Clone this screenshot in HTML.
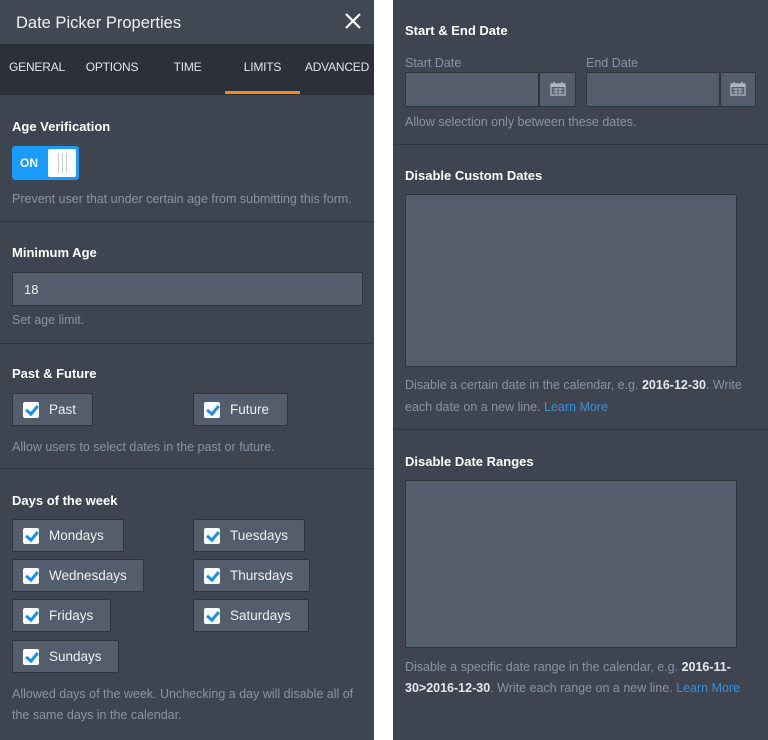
<!DOCTYPE html>
<html><head><meta charset="utf-8"><style>
*{margin:0;padding:0;box-sizing:border-box}
body{width:768px;height:740px;background:#fff;position:relative;overflow:hidden;font-family:"Liberation Sans",sans-serif;font-size:13px}
.p{position:absolute;top:0;height:740px;background:#3f4550}
.a{position:absolute;white-space:nowrap}
.h{font-weight:bold;color:#fff;font-size:13px;line-height:16px}
.d{color:#8893a3;font-size:12.5px;line-height:16px}
.hr{position:absolute;height:1px;background:#2f343c}
.cb{position:absolute;height:33px;background:#535d6c;border:1px solid #2f343c;border-radius:2px;color:#eef0f3;font-size:13.5px;line-height:31px;padding-left:36px}
.cb:before{content:"";position:absolute;left:10px;top:8px;width:16px;height:16px;background:#fff;border-radius:2px}
.cb:after{content:"";position:absolute;left:15px;top:9px;width:5px;height:9px;border:solid #1a8ff0;border-width:0 3px 3px 0;transform:rotate(40deg)}
.in{position:absolute;background:#535d6c;border:1px solid #2f343c;border-radius:2px}
.tab{position:absolute;top:44px;height:51px;line-height:46px;color:#e2e5ea;font-size:12px;text-align:center;letter-spacing:-0.2px}
.b{color:#e6e8ec;font-weight:bold}
.lm{color:#3b8fd6}
</style></head><body>
<div class="p" style="left:0;width:374px">
 <div class="a" style="left:0;top:0;width:374px;height:44px;background:#414753"></div>
 <div class="a" style="left:16px;top:13px;color:#eef0f3;font-size:16.5px;line-height:20px">Date Picker Properties</div>
 <svg class="a" style="left:345px;top:13px" width="16" height="16"><path d="M1 1L15 15M15 1L1 15" stroke="#fff" stroke-width="2.2"/></svg>
 <div class="a" style="left:0;top:44px;width:374px;height:51px;background:#2c3038"></div>
 <div class="tab" style="left:0;width:74px">GENERAL</div>
 <div class="tab" style="left:74px;width:76px">OPTIONS</div>
 <div class="tab" style="left:150px;width:75px">TIME</div>
 <div class="tab" style="left:225px;width:75px">LIMITS</div>
 <div class="tab" style="left:300px;width:74px">ADVANCED</div>
 <div class="a" style="left:225px;top:91px;width:75px;height:3px;background:#f5872b"></div>

 <div class="a h" style="left:12px;top:119px">Age Verification</div>
 <div class="a" style="left:12px;top:146px;width:67px;height:34px;background:#1a9cff;border-radius:3px"></div>
 <div class="a" style="left:20px;top:155px;color:#fff;font-weight:bold;font-size:12px;line-height:16px">ON</div>
 <div class="a" style="left:48px;top:149px;width:28px;height:28px;background:#fff;border-radius:2px"></div>
 <div class="a" style="left:58px;top:153px;width:9px;height:20px;border-left:1px solid #ccc;border-right:1px solid #ccc"></div>
 <div class="a" style="left:62px;top:153px;width:1px;height:20px;background:#ccc"></div>
 <div class="a d" style="left:12px;top:191px">Prevent user that under certain age from submitting this form.</div>
 <div class="hr" style="left:0;top:221px;width:374px"></div>

 <div class="a h" style="left:12px;top:245px">Minimum Age</div>
 <div class="in" style="left:12px;top:272px;width:351px;height:34px"></div>
 <div class="a" style="left:24px;top:282px;color:#eef0f3;font-size:13px;line-height:16px">18</div>
 <div class="a d" style="left:12px;top:312px">Set age limit.</div>
 <div class="hr" style="left:0;top:343px;width:374px"></div>

 <div class="a h" style="left:12px;top:366px">Past &amp; Future</div>
 <div class="cb" style="left:12px;top:393px;width:81px">Past</div>
 <div class="cb" style="left:193px;top:393px;width:95px">Future</div>
 <div class="a d" style="left:12px;top:439px">Allow users to select dates in the past or future.</div>
 <div class="hr" style="left:0;top:468px;width:374px"></div>

 <div class="a h" style="left:12px;top:493px">Days of the week</div>
 <div class="cb" style="left:12px;top:519px;width:112px">Mondays</div>
 <div class="cb" style="left:193px;top:519px;width:112px">Tuesdays</div>
 <div class="cb" style="left:12px;top:559px;width:132px">Wednesdays</div>
 <div class="cb" style="left:193px;top:559px;width:117px">Thursdays</div>
 <div class="cb" style="left:12px;top:599px;width:99px">Fridays</div>
 <div class="cb" style="left:193px;top:599px;width:116px">Saturdays</div>
 <div class="cb" style="left:12px;top:640px;width:107px">Sundays</div>
 <div class="a d" style="left:12px;top:686px">Allowed days of the week. Unchecking a day will disable all of</div>
 <div class="a d" style="left:12px;top:707px">the same days in the calendar.</div>
</div>

<div class="p" style="left:393px;width:375px">
 <div class="a h" style="left:12px;top:23px">Start &amp; End Date</div>
 <div class="a d" style="left:12px;top:55px">Start Date</div>
 <div class="a d" style="left:193px;top:55px">End Date</div>
 <div class="in" style="left:12px;top:72px;width:134px;height:35px"></div>
 <div class="in" style="left:146px;top:72px;width:37px;height:35px"></div>
 <div class="in" style="left:193px;top:72px;width:134px;height:35px"></div>
 <div class="in" style="left:327px;top:72px;width:36px;height:35px"></div>
 <svg class="a" style="left:157px;top:81px" width="16" height="15"><rect x="1" y="3" width="14" height="11" fill="none" stroke="#aeb6c2" stroke-width="1.3"/><rect x="1" y="3" width="14" height="3" fill="#aeb6c2"/><path d="M4 1v4M12 1v4" stroke="#aeb6c2" stroke-width="1.5"/><path d="M3 8h10M3 11h10M6 7v6M10 7v6" stroke="#aeb6c2" stroke-width="1"/></svg>
 <svg class="a" style="left:337px;top:81px" width="16" height="15"><rect x="1" y="3" width="14" height="11" fill="none" stroke="#aeb6c2" stroke-width="1.3"/><rect x="1" y="3" width="14" height="3" fill="#aeb6c2"/><path d="M4 1v4M12 1v4" stroke="#aeb6c2" stroke-width="1.5"/><path d="M3 8h10M3 11h10M6 7v6M10 7v6" stroke="#aeb6c2" stroke-width="1"/></svg>
 <div class="a d" style="left:12px;top:114px">Allow selection only between these dates.</div>
 <div class="hr" style="left:0;top:144px;width:375px"></div>

 <div class="a h" style="left:12px;top:168px">Disable Custom Dates</div>
 <div class="in" style="left:12px;top:194px;width:332px;height:173px"></div>
 <div class="a d" style="left:12px;top:377px">Disable a certain date in the calendar, e.g. <span class="b">2016-12-30</span>. Write</div>
 <div class="a d" style="left:12px;top:399px">each date on a new line. <span class="lm">Learn More</span></div>
 <div class="hr" style="left:0;top:429px;width:375px"></div>

 <div class="a h" style="left:12px;top:454px">Disable Date Ranges</div>
 <div class="in" style="left:12px;top:480px;width:332px;height:168px"></div>
 <div class="a d" style="left:12px;top:659px">Disable a specific date range in the calendar, e.g. <span class="b">2016-11-</span></div>
 <div class="a d" style="left:12px;top:680px"><span class="b">30&gt;2016-12-30</span>. Write each range on a new line. <span class="lm">Learn More</span></div>
</div>
</body></html>
